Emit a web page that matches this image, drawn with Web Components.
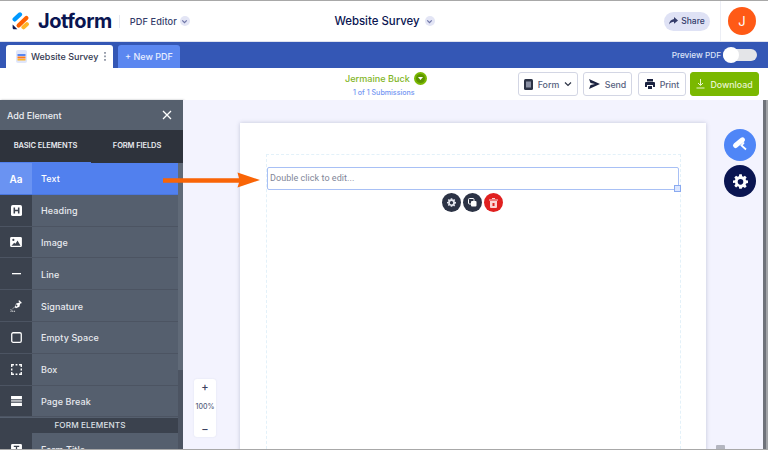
<!DOCTYPE html>
<html><head><meta charset="utf-8"><title>Jotform PDF Editor</title>
<style>
html,body{margin:0;padding:0;width:768px;height:450px;overflow:hidden;background:#fff;font-family:Inter,"Liberation Sans",sans-serif}
#win{width:768px;height:450px;display:flex;flex-direction:column;box-sizing:border-box;border-top:1px solid #a8a8a8;border-bottom:1px solid #a8a8a8;overflow:hidden;position:relative}
</style></head><body>
<div id="win">
<jf-header></jf-header>
<jf-tabbar></jf-tabbar>
<jf-toolbar></jf-toolbar>
<jf-main></jf-main>
</div>
<script>
const I={
text:'<span style="font:600 10px Inter,sans-serif;color:#fff">Aa</span>',
heading:'<svg width="11" height="11" viewBox="0 0 12 12"><rect width="12" height="12" rx="2" fill="#fff"/><path d="M3.600 2.600v6.800M8.400 2.600v6.800M3.600 6h4.800" stroke="#3b424e" stroke-width="1.700" fill="none"/></svg>',
image:'<svg width="12" height="10" viewBox="0 0 13 11"><rect width="13" height="11" rx="1.500" fill="#fff"/><circle cx="3.600" cy="3.200" r="1.200" fill="#3b424e"/><path d="M1.500 9.500l3-3.200 1.400 1.200 2.300-3.600 3.300 5.600z" fill="#3b424e"/></svg>',
line:'<svg width="9" height="2" viewBox="0 0 9 2"><rect width="9" height="1.300" fill="#fff"/></svg>',
sig:'<svg width="12" height="12" viewBox="0 0 13 13"><path d="M9 1.200l1-1 2.800 2.800-1 1-.7-.6-.9 3.800-3.700 1.800-1.500-1.500 1.700-3.800 3.800-1z" fill="#fff"/><circle cx="7" cy="6" r="1" fill="#3b424e"/><path d="M.5 12.200h5M.8 10.200l1.900 1.900M4.500 8l-2 2" stroke="#fff" stroke-width=".9" stroke-dasharray="1.200 .7" fill="none"/></svg>',
empty:'<svg width="11" height="11" viewBox="0 0 12 12"><rect x=".8" y=".8" width="10.400" height="10.400" rx="1.500" fill="none" stroke="#fff" stroke-width="1.400"/></svg>',
box:'<svg width="11" height="11" viewBox="0 0 12 12" fill="none" stroke="#fff" stroke-width="1.500"><path d="M.8 3.200V.8h2.400M8.800.8h2.400v2.400M11.200 8.800v2.400H8.800M3.200 11.200H.8V8.800M5 .8h2M5 11.200h2M.8 5v2M11.200 5v2"/></svg>',
pb:'<svg width="11" height="10" viewBox="0 0 12 11" fill="#fff"><path d="M0 0h12v3.600H0zM0 7.400h12V11H0z"/><rect y="4.800" width="12" height="1.300"/></svg>',
title:'<svg width="11" height="10" viewBox="0 0 12 11"><rect width="12" height="11" rx="1.500" fill="#fff"/><path d="M3 2.500h6M6 2.500v5.500M4.500 8h3" stroke="#3b424e" stroke-width="1.400" fill="none"/></svg>',
gear:(c,s)=>`<svg width="${s}" height="${s}" viewBox="0 0 24 24"><path fill="${c}" fill-rule="evenodd" d="M10 1h4l.6 3.100 1.900.8 2.600-1.800 2.800 2.800-1.800 2.600.8 1.900L24 11v4l-3.100.6-.8 1.900 1.800 2.600-2.800 2.800-2.600-1.800-1.900.8L14 24h-4l-.6-3.100-1.900-.8-2.600 1.800-2.800-2.800 1.800-2.600-.8-1.900L0 15v-4l3.100-.6.8-1.900L2.100 5.900l2.800-2.800 2.600 1.800 1.900-.8zM12 8.500a4.500 4.500 0 1 0 0 9 4.500 4.500 0 0 0 0-9z" transform="translate(0 -.5)"/></svg>`
};
function def(name,html,init){customElements.define(name,class extends HTMLElement{constructor(){super();this.attachShadow({mode:'open'}).innerHTML=typeof html==='function'?html(this):html;}connectedCallback(){init&&init(this)}})}
const chev=(s,c='#6f76a7')=>`<svg width="${s}" height="${s}" viewBox="0 0 8 8"><path d="M2 3l2 2 2-2" fill="none" stroke="${c}" stroke-width="1.100"/></svg>`;

def('jf-logo',`<style>:host{display:flex;align-items:center;gap:8px}span{font:700 20px/1 Inter,"Liberation Sans",sans-serif;color:#0a1551;letter-spacing:-.45px}</style>
<svg width="18" height="18" viewBox="0 0 18 18" fill="none" stroke-linecap="round" stroke-width="4.200"><path d="M2.600 7.400L8 2.400" stroke="#0099ff"/><path d="M6.600 13.600L14.400 6" stroke="#ff6100"/><path d="M11.500 15.200L14.800 12.200" stroke="#ffb629"/><path d="M.6 12.600v3.200c0 .9.600 1.500 1.400 1.500h3.400z" fill="#0a1551" stroke="none"/></svg><span>Jotform</span>`);
def('jf-round-chev',`<style>:host{display:inline-flex;width:10px;height:10px;border-radius:50%;background:#e3e5f5;align-items:center;justify-content:center}</style>`+chev(9));

def('jf-header',`<style>:host{display:flex;flex:none;height:41px;background:#fff;align-items:center;box-sizing:border-box;border-bottom:1px solid #dfe2ee;position:relative}
.l{display:flex;align-items:center;width:256px;box-sizing:border-box;padding-left:12px}
.sep{width:1px;height:13px;background:#e6e8f0;margin:0 10px 0 7px}
.ed{font:500 9.200px Inter,sans-serif;color:#343c6a;display:flex;gap:3px;align-items:center;letter-spacing:.1px}
.c{width:256px;display:flex;justify-content:center;gap:5px;align-items:center;font:500 11.400px Inter,sans-serif;color:#0a1551;padding-left:1px;box-sizing:border-box}
.r{flex:1;display:flex;align-items:center;justify-content:flex-end;height:100%}
.share{height:19px;width:46px;border-radius:10px;background:#dfe2f5;color:#343c6a;font:500 8.500px Inter,sans-serif;display:flex;align-items:center;justify-content:center;gap:3px;margin-right:10px}
.av{height:100%;border-left:1px solid #eceef5;width:48px;box-sizing:border-box;display:flex;align-items:center;padding-left:7px}
.av b{width:28px;height:28px;border-radius:50%;background:#ff5a16;color:#fff;font:400 13px Inter,sans-serif;display:flex;align-items:center;justify-content:center}
</style>
<div class="l"><jf-logo></jf-logo><div class="sep"></div><div class="ed">PDF Editor <jf-round-chev></jf-round-chev></div></div>
<div class="c">Website Survey <jf-round-chev></jf-round-chev></div>
<div class="r"><div class="share"><svg width="9" height="8" viewBox="0 0 9 8"><path d="M5 0l4 3.400L5 6.800V4.800C2.800 4.800 1.300 5.600 0 7.500.3 4.500 2 2.500 5 2z" fill="#343c6a"/></svg>Share</div><div class="av"><b>J</b></div></div>`);

def('jf-tabbar',`<style>:host{display:flex;flex:none;height:26px;background:#3457b5;align-items:flex-end;padding-left:6px;gap:5px;position:relative;box-sizing:border-box}
.t{height:23px;background:#fff;border-radius:3px 3px 0 0;width:107px;display:flex;align-items:center;box-sizing:border-box;padding-left:10px;gap:4px;font:500 9px Inter,sans-serif;color:#33384f}
.n{height:23px;background:#5b87f0;border-radius:3px 3px 0 0;width:62px;display:flex;align-items:center;justify-content:center;font:500 9px Inter,sans-serif;color:#e8eeff}
.p{margin-left:auto;align-self:center;display:flex;align-items:center;font:500 8.200px Inter,sans-serif;color:#dde4f8;margin-right:11px}
.sw{width:34px;height:12px;background:#e4e5e8;border-radius:6px;position:relative;margin-left:2px}
.sw i{position:absolute;left:0;top:-2px;width:16px;height:16px;border-radius:50%;background:#fff}
.dots{margin-left:2px;width:2px;height:10px;background:radial-gradient(circle at 1px 1px,#9aa0ad 1px,transparent 1.100px) 0 0/2px 3.500px}
</style>
<div class="t"><svg width="11" height="13" viewBox="0 0 11 13"><rect width="11" height="13" rx="2" fill="#dfe6fb"/><rect x="1.500" y="4" width="8" height="2" fill="#5b87f0"/><rect x="1.500" y="6.500" width="8" height="2" fill="#ff7a1a"/><rect x="1.500" y="9" width="8" height="1.500" fill="#ffb629"/></svg><span>Website Survey</span><i class="dots"></i></div>
<div class="n">+ New PDF</div>
<div class="p">Preview PDF<div class="sw"><i></i></div></div>`);

def('jf-btn',h=>`<style>:host{display:flex;align-items:center;justify-content:center;gap:5px;height:24px;box-sizing:border-box;border:1px solid #d3d6e4;border-radius:3px;background:#fff;color:#56607e;font:500 8.800px Inter,sans-serif}
:host([green]){background:#7ab800;border-color:#7ab800;color:#e9f5cf}</style><slot></slot>`);
def('jf-toolbar',`<style>:host{display:block;flex:none;height:32px;background:#fff;position:relative}
.who{position:absolute;left:345px;top:4px;width:90px;text-align:center}
.row{display:flex;align-items:center;gap:4px;font:500 9.100px Inter,sans-serif;color:#7fb51e;white-space:nowrap;height:13px}
.sub{font:500 7.100px Inter,sans-serif;color:#7496f2;margin-top:3px;padding-left:8px;text-align:left;white-space:nowrap}
.b{position:absolute;right:9px;top:4px;display:flex;gap:5px}
</style>
<div class="who"><div class="row">Jermaine Buck <svg width="13" height="13" viewBox="0 0 13 13"><circle cx="6.500" cy="6.500" r="6.500" fill="#7ab800"/><circle cx="6.500" cy="6.500" r="4.500" fill="#5d9400"/><path d="M4 5h5L6.500 8z" fill="#fff"/></svg></div><div class="sub">1 of 1 Submissions</div></div>
<div class="b">
<jf-btn style="width:60px"><svg width="9" height="11" viewBox="0 0 9 11"><rect width="9" height="11" rx="1.500" fill="#2c3345"/><rect x="2" y="2.500" width="5" height="6" fill="#8a90a3"/></svg><span>Form</span><svg width="8" height="8" viewBox="0 0 8 8"><path d="M1 2.500l3 3 3-3" fill="none" stroke="#2c3345" stroke-width="1.200"/></svg></jf-btn>
<jf-btn style="width:49px;margin-right:1px"><svg width="11" height="10" viewBox="0 0 11 10"><path d="M0 0l11 5-11 5 1.500-4L6 5 1.500 4z" fill="#1b2240"/></svg><span>Send</span></jf-btn>
<jf-btn style="width:48px;margin-right:-1px"><svg width="10" height="10" viewBox="0 0 10 10"><path d="M2 0h6v2.500H2zM1 3h8a1 1 0 0 1 1 1v4H8V6H2v2H0V4a1 1 0 0 1 1-1zM3 7h4v3H3z" fill="#1b2240"/></svg><span>Print</span></jf-btn>
<jf-btn green style="width:69px"><svg width="9" height="10" viewBox="0 0 9 10"><path d="M4.500 0v6M2 4l2.500 2.500L7 4M.5 9h8" fill="none" stroke="#e9f5cf" stroke-width="1"/></svg><span>Download</span></jf-btn>
</div>`);

def('jf-row',h=>`<style>:host{display:flex;height:31.800px;flex:none;box-sizing:border-box;border-bottom:1px solid #4c5462;color:#e8eaef;font:500 9px Inter,sans-serif;background:#555f6e}
.i{width:32px;background:#3b424e;display:flex;align-items:center;justify-content:center;flex:none;box-sizing:border-box;padding-top:1px}
.l{padding-left:9px;align-self:center;letter-spacing:.1px;padding-top:1px}
:host([active]){background:#5180ee;color:#fff;border-bottom:1px solid #4a76dd}
:host([active]) .i{background:#6a93f2}</style>
<div class="i">${I[h.getAttribute('icon')]}</div><div class="l"><slot></slot></div>`);

def('jf-sidebar',`<style>:host{display:flex;flex-direction:column;width:183px;flex:none;height:100%;background:#555f6e;position:relative;overflow:hidden;box-shadow:1px 0 2px rgba(40,45,60,.35)}
.h{height:30px;flex:none;display:flex;align-items:center;justify-content:space-between;padding:0 11px 0 7px;font:500 9px Inter,sans-serif;color:#edeff3;background:#56606e}
.tabs{height:33px;flex:none;display:flex;font:600 7.500px Inter,sans-serif;color:#e8eaef;background:#2e333c}
.tabs div{flex:1;display:flex;align-items:center;justify-content:center;letter-spacing:-.1px;padding-bottom:2px}
.tabs div:first-child{flex:0 0 91px;box-shadow:inset 0 -1px 0 #5180ee}
.list{display:flex;flex-direction:column;width:178px;flex:1;overflow:hidden}
.sec{height:15px;margin-top:1px;flex:none;background:#3b424e;color:#dde0e6;font:500 8.200px/15px Inter,sans-serif;text-align:center;padding-left:2px;letter-spacing:.1px}
.sb{position:absolute;right:0;top:63px;bottom:0;width:5px;background:#606a78}
.sb i{position:absolute;top:207px;left:0;right:0;bottom:0;background:#4c5462;display:block}
</style>
<div class="h">Add Element<svg width="10" height="10" viewBox="0 0 10 10"><path d="M1 1l8 8M9 1l-8 8" stroke="#fff" stroke-width="1.300"/></svg></div>
<div class="tabs"><div>BASIC ELEMENTS</div><div>FORM FIELDS</div></div>
<div class="list">
<jf-row icon="text" active>Text</jf-row><jf-row icon="heading">Heading</jf-row><jf-row icon="image">Image</jf-row><jf-row icon="line">Line</jf-row><jf-row icon="sig">Signature</jf-row><jf-row icon="empty">Empty Space</jf-row><jf-row icon="box">Box</jf-row><jf-row icon="pb">Page Break</jf-row>
<div class="sec">FORM ELEMENTS</div>
<jf-row icon="title">Form Title</jf-row></div>
<div class="sb"><i></i></div>`);

def('jf-zoom',`<style>:host{position:absolute;left:11px;top:279px;width:22px;height:58px;background:#fff;border-radius:3px;display:block;font:500 7px Inter,sans-serif;color:#56607e;box-shadow:0 0 2px rgba(90,100,130,.12)}
div{display:flex;align-items:center;justify-content:center;box-sizing:border-box}b{font-weight:500;font-size:11px;color:#3b4260}</style><div style="height:16px"><b>+</b></div><div style="height:23px">100%</div><div style="height:19px;padding-top:3px"><b>−</b></div>`);

def('jf-page',`<style>:host{display:block;width:466px;height:330px;margin:23px auto 0 57px;background:#fff;box-shadow:0 0 4px rgba(70,80,120,.28);box-sizing:border-box;padding:31px 26px 0 26px}
.d{border:1px dashed #e3f1f9;border-bottom:0;height:300px;box-sizing:border-box;padding-top:12px;margin-right:-1px;position:relative}
.f{height:23px;margin-right:1px;border:1px solid #a8c0f5;border-radius:2px;box-sizing:border-box;font:400 9px/21px Roboto,sans-serif;color:#7f8698;padding-left:2px;position:relative;letter-spacing:.05px}
.k{position:absolute;right:-3px;bottom:-3px;width:5px;height:5px;background:#dbe6ff;border:1px solid #8aaaf0}
.a{display:flex;justify-content:center;gap:2px;margin-top:3px;padding-right:2px}
.a i{width:19px;height:19px;border-radius:50%;background:#2c3345;display:flex;align-items:center;justify-content:center}
.a i.r{background:#e0201f}</style>
<div class="d"><div class="f">Double click to edit...<span class="k"></span></div>
<div class="a"><i>${I.gear('#e4e6ee',9)}</i><i><svg width="9" height="9" viewBox="0 0 9 9"><rect x=".5" y=".5" width="5.500" height="5.500" rx="1" fill="none" stroke="#fff"/><rect x="3" y="3" width="5.500" height="5.500" rx="1" fill="#fff"/></svg></i><i class="r"><svg width="9" height="10" viewBox="0 0 9 10"><path d="M0 1.500h9v1H0zM3 0h3v1H3zM1 3h7v6a1 1 0 0 1-1 1H2a1 1 0 0 1-1-1z" fill="#fbd5d5"/><rect x="3.500" y="5" width="2" height="3" fill="#e0201f"/></svg></i></div></div>`);

def('jf-arrow',`<style>:host{position:absolute;left:163px;top:72px;width:97px;height:16px;display:block}</style><svg width="97" height="16" viewBox="0 0 97 16"><path d="M0 6.200h76L74.500 .5 97 8 74.500 15.500 76 10.800H0z" fill="#f96406"/></svg>`);

def('jf-fab',`<style>:host{position:absolute;left:541px;top:29px;display:flex;flex-direction:column;gap:4px}
i{width:32px;height:32px;border-radius:50%;display:flex;align-items:center;justify-content:center}</style>
<i style="background:#4f86f7"><svg width="18" height="18" viewBox="0 0 18 18" fill="none" stroke="#fff" stroke-linecap="round"><path d="M4.500 9.500L11.500 3.800" stroke-width="5"/><path d="M13 6.500L10.500 9.500 15 13.500" stroke-width="1.800" stroke-linecap="butt"/></svg></i>
<i style="background:#0a1551">${I.gear('#fff',15)}</i>`);

def('jf-canvas',`<style>:host{display:block;flex:1;height:100%;background:#f3f3fe;position:relative;overflow:hidden}
.g{position:absolute;right:0;top:0;bottom:0;width:5px;background:linear-gradient(90deg,#6f727a 0 3px,#a2a4a8 3px)}
.s{position:absolute;left:533px;bottom:0;width:9px;height:4px;background:#b4b6c0;border-radius:1px 1px 0 0}
</style><jf-page></jf-page><jf-zoom></jf-zoom><jf-fab></jf-fab><div class="s"></div><div class="g"></div>`);

def('jf-main',`<style>:host{display:flex;flex:1;min-height:0;position:relative;box-sizing:border-box}</style><jf-sidebar></jf-sidebar><jf-canvas></jf-canvas><jf-arrow></jf-arrow>`);
</script>
</body></html>
